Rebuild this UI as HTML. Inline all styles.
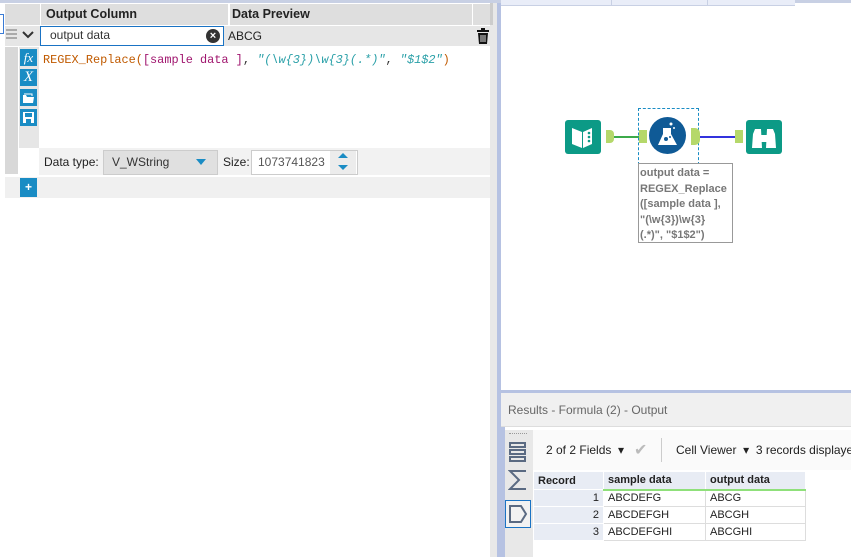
<!DOCTYPE html><html><head><style>
body{margin:0;width:851px;height:557px;position:relative;overflow:hidden;background:#fff;font-family:"Liberation Sans",sans-serif;font-size:12px}
.a{position:absolute}
.ib{background:#1a8cc4;width:17px;height:17px}
.mono{font-family:"Liberation Mono","DejaVu Sans Mono",monospace}
</style></head><body>
<div class="a" style="left:0;top:0;width:851px;height:3px;background:#c8d0e4"></div>
<div class="a" style="left:0;top:14px;width:3px;height:18px;border:1px solid #3a7bd5;border-left:none;"></div>
<!-- header -->
<div class="a" style="left:5px;top:4px;width:488px;height:21px;background:#dedede"></div>
<div class="a" style="left:40px;top:4px;width:182px;height:21px;border-left:1px solid #fff;border-right:2px solid #fff;font-weight:bold;font-size:12.5px;line-height:21px;padding-left:5px;color:#222">Output Column</div>
<div class="a" style="left:232px;top:4px;font-weight:bold;font-size:12.5px;line-height:21px;color:#222">Data Preview</div>
<div class="a" style="left:472px;top:4px;width:1px;height:42px;background:#fff"></div>
<!-- row -->
<div class="a" style="left:5px;top:26px;width:488px;height:20px;background:#e6e6e6"></div>
<div class="a" style="left:6px;top:29px;width:11px;height:2px;background:#aaa;box-shadow:0 4px #aaa,0 8px #aaa"></div>
<svg class="a" style="left:22px;top:31px" width="12" height="8"><path d="M1 1 L6 6 L11 1" fill="none" stroke="#333" stroke-width="2"/></svg>
<div class="a" style="left:40px;top:26px;width:182px;height:18px;border:1px solid #1a73c4;background:#fff"></div>
<div class="a" style="left:50px;top:28px;font-size:12px;color:#333">output data</div>
<div class="a" style="left:206px;top:29px;width:14px;height:14px;border-radius:50%;background:#333;color:#fff;font-size:11px;line-height:14px;text-align:center;font-weight:bold">×</div>
<div class="a" style="left:228px;top:29px;font-size:12px;color:#222">ABCG</div>
<svg class="a" style="left:476px;top:28px" width="14" height="16"><rect x="1" y="2" width="12" height="2" fill="#111"/><rect x="5" y="0" width="4" height="2" fill="#111"/><path d="M2 5 L12 5 L11 16 L3 16Z" fill="#111"/><path d="M5 7 V14 M7 7 V14 M9 7 V14" stroke="#ddd" stroke-width="1"/></svg>
<!-- editor -->
<div class="a" style="left:5px;top:47px;width:13px;height:127px;background:#d8d8d8"></div>
<div class="a" style="left:19px;top:47px;width:20px;height:101px;background:#e6e6e6"></div>
<div class="a ib" style="left:20px;top:49px;color:#fff;font-style:italic;font-family:'Liberation Serif';font-size:13px;line-height:17px;text-align:center">fx</div>
<div class="a ib" style="left:20px;top:69px;color:#fff;font-style:italic;font-family:'Liberation Serif';font-size:15px;line-height:17px;text-align:center">X</div>
<div class="a ib" style="left:20px;top:89px"><svg width="17" height="17"><path d="M3 6 L3 14 L13 14 L14 8 L7 8 L6 6Z" fill="#fff"/><path d="M4 5 L12 5 L12 7" fill="none" stroke="#fff"/></svg></div>
<div class="a ib" style="left:20px;top:109px"><svg width="17" height="17"><rect x="3" y="3" width="11" height="11" fill="#fff"/><rect x="5" y="4" width="7" height="4" fill="#1a8cc4"/><rect x="6" y="10" width="5" height="4" fill="#1a8cc4"/></svg></div>
<div class="a mono" style="left:43px;top:53px;font-size:11.9px;white-space:pre;letter-spacing:0"><span style="color:#c05a00">REGEX_Replace(</span><span style="color:#a0156e">[sample data ]</span><span style="color:#333">, </span><span style="color:#2aa0a8;font-style:italic">"(\w{3})\w{3}(.*)"</span><span style="color:#333">, </span><span style="color:#2aa0a8;font-style:italic">"$1$2"</span><span style="color:#c05a00">)</span></div>
<div class="a" style="left:39px;top:148px;width:454px;height:27px;background:#f2f2f2"></div>
<div class="a" style="left:44px;top:155px;color:#222">Data type:</div>
<div class="a" style="left:103px;top:150px;width:113px;height:23px;background:#e0e0e0;border:1px solid #ccc"></div>
<div class="a" style="left:112px;top:155px;color:#333">V_WString</div>
<div class="a" style="left:196px;top:159px;border:5px solid transparent;border-top:6px solid #1a8cc4"></div>
<div class="a" style="left:223px;top:155px;color:#222">Size:</div>
<div class="a" style="left:251px;top:150px;width:105px;height:23px;background:#fff;border:1px solid #ccc"></div>
<div class="a" style="left:258px;top:155px;color:#555">1073741823</div>
<div class="a" style="left:330px;top:151px;width:26px;height:23px;background:#ececec"></div>
<div class="a" style="left:338px;top:153px;border:5px solid transparent;border-bottom:5px solid #1a8cc4;border-top:none"></div>
<div class="a" style="left:338px;top:165px;border:5px solid transparent;border-top:5px solid #1a8cc4;border-bottom:none"></div>
<div class="a" style="left:5px;top:177px;width:488px;height:21px;background:#f0f0f0"></div>
<div class="a ib" style="left:20px;top:178px;height:19px;color:#fff;font-weight:bold;text-align:center;line-height:19px">+</div>
<!-- scroll/divider -->
<div class="a" style="left:490px;top:3px;width:7px;height:554px;background:#e8e8e8"></div>
<div class="a" style="left:490px;top:3px;width:3px;height:22px;background:#ccc"></div>
<div class="a" style="left:497px;top:3px;width:4px;height:554px;background:#b6c2e2"></div>
<!-- canvas top tabs -->
<div class="a" style="left:501px;top:0;width:294px;height:5px;background:#e9edf8;border-bottom:1px solid #c8d0e4"></div>
<div class="a" style="left:611px;top:0;width:1px;height:5px;background:#c8d0e4"></div>
<div class="a" style="left:707px;top:0;width:1px;height:5px;background:#c8d0e4"></div>
<!-- tools -->
<div class="a" style="left:565px;top:120px;width:36px;height:34px;background:#0c9a86;border-radius:3px"></div>
<svg class="a" style="left:565px;top:120px" width="36" height="34"><path d="M7 8 L17 12 L17 28 L7 24Z M18 12 L27 8 L27 24 L18 28Z" fill="#fff"/><circle cx="24" cy="13" r="1.3" fill="#0c9a86"/><circle cx="24" cy="17" r="1.3" fill="#0c9a86"/><circle cx="24" cy="21" r="1.3" fill="#0c9a86"/></svg>
<div class="a" style="left:606px;top:130px;width:8px;height:13px;background:#b5d86a;border-radius:0 4px 4px 0"></div>
<div class="a" style="left:614px;top:136px;width:25px;height:2px;background:#3caa4a"></div>
<div class="a" style="left:639px;top:130px;width:8px;height:13px;background:#b5d86a"></div>
<div class="a" style="left:638px;top:108px;width:59px;height:55px;border:1px dashed #1a8cc4"></div>
<div class="a" style="left:649px;top:117px;width:37px;height:37px;border-radius:50%;background:#0f5a96"></div>
<svg class="a" style="left:649px;top:117px" width="37" height="37"><path d="M14 11 L22 11 L22 17 L28 28 L9 28 L14 17Z" fill="#fff"/><circle cx="22" cy="7" r="1.5" fill="#fff"/><circle cx="25" cy="11" r="1" fill="#fff"/><circle cx="17" cy="22" r="2" fill="#0f5a96"/><circle cx="21" cy="20" r="1" fill="#0f5a96"/></svg>
<div class="a" style="left:691px;top:128px;width:9px;height:17px;background:#b5d86a;border-radius:0 5px 5px 0"></div>
<div class="a" style="left:700px;top:136px;width:38px;height:2px;background:#3333dd"></div>
<div class="a" style="left:735px;top:130px;width:8px;height:13px;background:#b5d86a"></div>
<div class="a" style="left:746px;top:120px;width:36px;height:34px;background:#0c9a86;border-radius:3px"></div>
<svg class="a" style="left:746px;top:120px" width="36" height="34"><path d="M9 9 L15 9 L16 28 L6 28 L7 14Z M21 9 L27 9 L29 14 L30 28 L20 28Z M15 15 L21 15 L21 22 L15 22Z" fill="#fff"/></svg>
<div class="a" style="left:638px;top:163px;width:93px;height:78px;background:#fff;border:1px solid #999"></div>
<div class="a" style="left:640px;top:166px;font-size:11px;line-height:15.5px;color:#777;font-weight:bold">output data =<br>REGEX_Replace<br>([sample data ],<br>"(\w{3})\w{3}<br>(.*)", "$1$2")</div>
<!-- results -->
<div class="a" style="left:501px;top:390px;width:350px;height:3px;background:#b6c2e2"></div>
<div class="a" style="left:501px;top:393px;width:350px;height:33px;background:#f0f0f0;border-bottom:1px solid #ddd"></div>
<div class="a" style="left:508px;top:403px;color:#666;font-size:12px">Results - Formula (2) - Output</div>
<div class="a" style="left:501px;top:427px;width:4px;height:130px;background:#b6c2e2"></div>
<div class="a" style="left:505px;top:430px;width:28px;height:127px;background:#e8e8e8"></div>
<div class="a" style="left:509px;top:433px;width:18px;height:1px;border-top:1px dotted #999"></div>
<svg class="a" style="left:509px;top:442px" width="18" height="20"><rect x="1" y="1" width="15" height="4" fill="none" stroke="#5a6a82" stroke-width="2"/><rect x="1" y="8" width="15" height="4" fill="none" stroke="#5a6a82" stroke-width="2"/><rect x="1" y="15" width="15" height="4" fill="none" stroke="#5a6a82" stroke-width="2"/></svg>
<svg class="a" style="left:508px;top:469px" width="20" height="22"><path d="M18 2 L2 2 L11 11 L2 20 L18 20" fill="none" stroke="#5a6a82" stroke-width="2"/></svg>
<div class="a" style="left:505px;top:500px;width:24px;height:26px;border:1px solid #1a73c4;background:#f2f2f2"></div>
<svg class="a" style="left:508px;top:504px" width="20" height="20"><path d="M2 2 L13 2 L18 10 L13 18 L2 18Z" fill="none" stroke="#5a6a82" stroke-width="2"/></svg>
<div class="a" style="left:533px;top:430px;width:318px;height:40px;background:#fafafa"></div>
<div class="a" style="left:546px;top:443px;color:#222">2 of 2 Fields &nbsp;▾</div>
<div class="a" style="left:634px;top:440px;color:#bbb;font-size:16px">✔</div>
<div class="a" style="left:661px;top:438px;width:1px;height:24px;background:#ccc"></div>
<div class="a" style="left:676px;top:443px;color:#222;white-space:nowrap">Cell Viewer &nbsp;▾ &nbsp;3 records displayed</div>
<table class="a" style="left:533px;top:471px;border-collapse:collapse;font-size:11px;color:#222">
<tr style="background:#e8ecf4;font-weight:bold;height:18px"><td style="width:64px;padding-left:4px;border:1px solid #fff">Record</td><td style="width:96px;padding-left:4px;border:1px solid #fff;border-bottom:2px solid #8fe07a">sample data</td><td style="width:94px;padding-left:4px;border:1px solid #fff;border-bottom:2px solid #8fe07a">output data</td></tr>
<tr style="height:17px"><td style="text-align:right;padding-right:4px;background:#e8ecf4;border:1px solid #fff">1</td><td style="padding-left:4px;border:1px solid #ddd">ABCDEFG</td><td style="padding-left:4px;border:1px solid #ddd">ABCG</td></tr>
<tr style="height:17px"><td style="text-align:right;padding-right:4px;background:#e8ecf4;border:1px solid #fff">2</td><td style="padding-left:4px;border:1px solid #ddd">ABCDEFGH</td><td style="padding-left:4px;border:1px solid #ddd">ABCGH</td></tr>
<tr style="height:17px"><td style="text-align:right;padding-right:4px;background:#e8ecf4;border:1px solid #fff">3</td><td style="padding-left:4px;border:1px solid #ddd">ABCDEFGHI</td><td style="padding-left:4px;border:1px solid #ddd">ABCGHI</td></tr>
</table>
</body></html>
